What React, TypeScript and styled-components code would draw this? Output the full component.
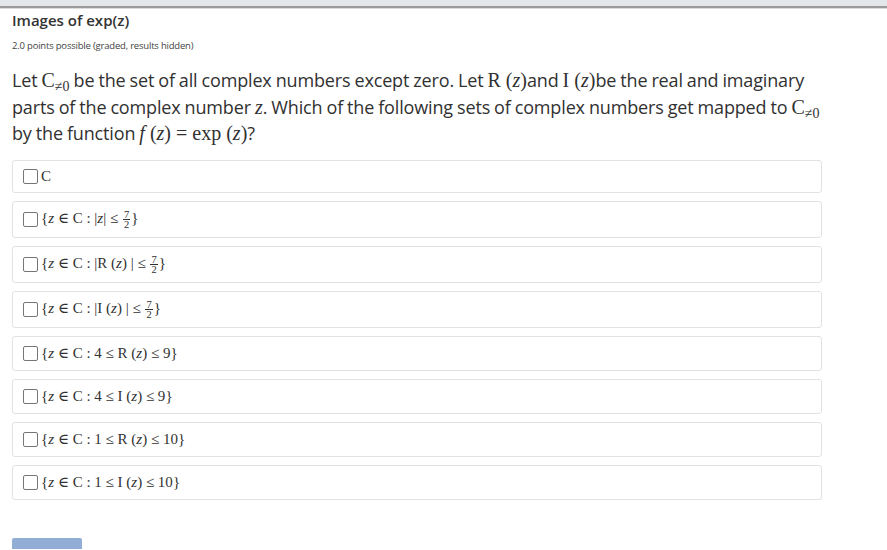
import React from "react"
import styled, { createGlobalStyle } from "styled-components"

const GlobalStyle = createGlobalStyle`
  html, body {
    margin: 0;
    padding: 0;
    background: #fff;
  }
  body {
    font-family: "Open Sans", "Noto Sans", sans-serif;
    color: #313131;
  }
`

const TopBar = styled.div`
  height: 6px;
  background: #e4e7ea;
  border-bottom: 2px solid #9a9a9a;
  box-shadow: 0 1px 0 #dcdcdc;
`

const Problem = styled.div`
  padding: 1px 12px 0 12px;
  width: 810px;
`

const Title = styled.h3`
  margin: 0;
  font-size: 15px;
  font-weight: 600;
  color: #333;
  line-height: 22px;
`

const Points = styled.div`
  margin-top: 8px;
  font-size: 9.5px;
  color: #444;
  letter-spacing: -0.2px;
`

const Question = styled.p`
  margin: 15px 0 14px 0;
  font-size: 18px;
  line-height: 26px;
  color: #313131;
  letter-spacing: -0.15px;
  word-spacing: -0.5px;
`

const M = styled.span<{ $size?: number }>`
  font-family: "Liberation Serif", "DejaVu Serif", serif;
  font-size: ${(p) => (p.$size ? p.$size : 20)}px;
  line-height: 1;
  letter-spacing: 0;
  word-spacing: 0;
  white-space: nowrap;
`

const I = styled.i`
  font-family: "Liberation Serif", serif;
`

const Sub = styled.span`
  font-size: 0.7em;
  line-height: 1;
  vertical-align: -0.25em;
`

const Options = styled.div`
  display: flex;
  flex-direction: column;
  gap: 8px;
`

const Option = styled.label<{ $h: number }>`
  display: flex;
  align-items: center;
  height: ${(p) => p.$h}px;
  box-sizing: border-box;
  border: 1px solid #e2e2e2;
  border-radius: 3px;
  padding-left: 10px;
  background: #fff;
`

const Box = styled.span`
  width: 15px;
  height: 15px;
  box-sizing: border-box;
  border: 1px solid #767676;
  border-radius: 2px;
  margin-right: 3px;
  flex-shrink: 0;
`

const Frac = styled.span`
  display: inline-flex;
  flex-direction: column;
  align-items: center;
  vertical-align: middle;
  font-size: 10.5px;
  line-height: 9px;
  margin: 0 1px;
  & > span:first-child {
    border-bottom: 1px solid #313131;
    padding: 0 1px;
  }
`

const Submit = styled.div`
  margin-top: 38px;
  width: 70px;
  height: 11px;
  background: #92aed6;
  border-radius: 2px 2px 0 0;
`

const half = (
  <Frac>
    <span>7</span>
    <span>2</span>
  </Frac>
)

const options: { h: number; content: React.ReactNode }[] = [
  { h: 33, content: <M $size={15}>C</M> },
  { h: 37, content: <M $size={15}>{"{"}<I>z</I> ∈ C : |<I>z</I>| ≤ {half}{"}"}</M> },
  { h: 37, content: <M $size={15}>{"{"}<I>z</I> ∈ C : |R (<I>z</I>) | ≤ {half}{"}"}</M> },
  { h: 37, content: <M $size={15}>{"{"}<I>z</I> ∈ C : |I (<I>z</I>) | ≤ {half}{"}"}</M> },
  { h: 35, content: <M $size={15}>{"{"}<I>z</I> ∈ C : 4 ≤ R (<I>z</I>) ≤ 9{"}"}</M> },
  { h: 35, content: <M $size={15}>{"{"}<I>z</I> ∈ C : 4 ≤ I (<I>z</I>) ≤ 9{"}"}</M> },
  { h: 35, content: <M $size={15}>{"{"}<I>z</I> ∈ C : 1 ≤ R (<I>z</I>) ≤ 10{"}"}</M> },
  { h: 35, content: <M $size={15}>{"{"}<I>z</I> ∈ C : 1 ≤ I (<I>z</I>) ≤ 10{"}"}</M> },
]

export default function App() {
  return (
    <>
      <GlobalStyle />
      <TopBar />
      <Problem>
        <Title>Images of exp(z)</Title>
        <Points>2.0 points possible (graded, results hidden)</Points>
        <Question>
          Let <M>C<Sub>≠0</Sub></M> be the set of all complex numbers except zero. Let{" "}
          <M>R (<I>z</I>)</M>and <M>I (<I>z</I>)</M>be the real and imaginary parts of the complex
          number <M><I>z</I></M>. Which of the following sets of complex numbers get mapped to{" "}
          <M>C<Sub>≠0</Sub></M> by the function{" "}
          <M>
            <I>f</I> (<I>z</I>) = exp (<I>z</I>)
          </M>
          ?
        </Question>
        <Options>
          {options.map((o, i) => (
            <Option key={i} $h={o.h}>
              <Box />
              {o.content}
            </Option>
          ))}
        </Options>
        <Submit />
      </Problem>
    </>
  )
}
